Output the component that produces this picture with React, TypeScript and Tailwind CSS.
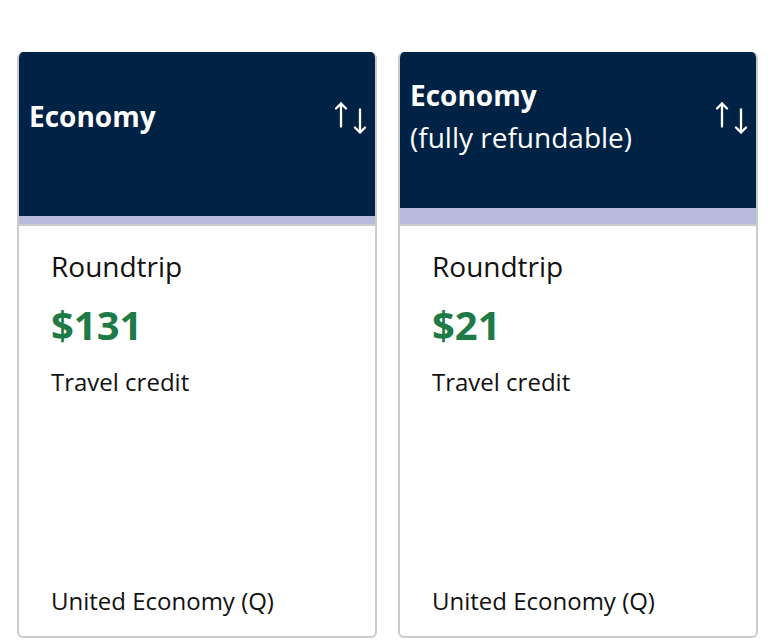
const font = { fontFamily: '"Open Sans", "Noto Sans", sans-serif' };

function SortIcon() {
  return (
    <svg className="mt-[4px]" width="32" height="32" viewBox="0 0 32 32" fill="none" stroke="white" strokeWidth={2.3} strokeLinecap="round" strokeLinejoin="round">
      <path d="M6 1.5v23" />
      <path d="M1 6.5l5-5 5 5" />
      <path d="M25 7.5v23" />
      <path d="M20 25.5l5 5 5-5" />
    </svg>
  );
}

interface FareCardProps {
  title: string;
  subtitle?: string;
  price: string;
  headerClass: string;
  stripeClass: string;
}

function FareCard({ title, subtitle, price, headerClass, stripeClass }: FareCardProps) {
  return (
    <div className="flex w-[360px] flex-col overflow-hidden rounded-[6px] border-2 border-t-0 border-[#cccccc] bg-white">
      <div className={`-mx-[2px] bg-[#002244] ${headerClass}`}>
        <div className="flex h-[128px] items-center justify-between pl-[12px] pr-[10px] text-white">
          <div className="text-[28px] leading-[42px]">
            <div className="font-bold">{title}</div>
            {subtitle && <div>{subtitle}</div>}
          </div>
          <SortIcon />
        </div>
      </div>
      <div className={`-mx-[2px] bg-[#b8bbdc] ${stripeClass}`} />
      <div className="flex flex-1 flex-col border-t-2 border-[#cccccc] px-[32px] pt-[21px] pb-[19px] text-[#111111]">
        <div className="text-[28px] leading-[38px]">Roundtrip</div>
        <div className="mt-[16px] text-[40px] font-bold leading-[48px] text-[#1e7a46]">{price}</div>
        <div className="mt-[17px] text-[24px] leading-[32px]">Travel credit</div>
        <div className="mt-auto text-[24px] leading-[32px]">United Economy (Q)</div>
      </div>
    </div>
  );
}

export default function App() {
  return (
    <div className="flex h-[640px] w-[770px] gap-[21px] bg-white pl-[17px] pt-[52px] pb-[2px]" style={font}>
      <FareCard title="Economy" price="$131" headerClass="h-[164px]" stripeClass="h-[8px]" />
      <FareCard title="Economy" subtitle="(fully refundable)" price="$21" headerClass="h-[156px]" stripeClass="h-[16px]" />
    </div>
  );
}
